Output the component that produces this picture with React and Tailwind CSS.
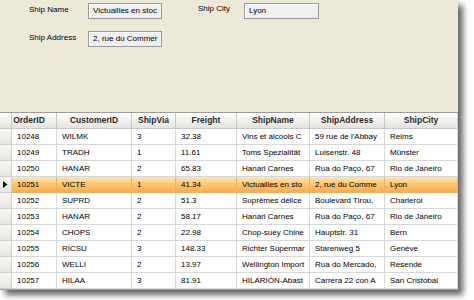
import React from "react";

const rows = [
  ["10248", "WILMK", "3", "32.38", "Vins et alcools C", "59 rue de l'Abbay", "Reims"],
  ["10249", "TRADH", "1", "11.61", "Toms Spezialität", "Luisenstr. 48", "Münster"],
  ["10250", "HANAR", "2", "65.83", "Hanari Carnes", "Rua do Paço, 67", "Rio de Janeiro"],
  ["10251", "VICTE", "1", "41.34", "Victuailles en sto", "2, rue du Comme", "Lyon"],
  ["10252", "SUPRD", "2", "51.3", "Suprêmes délice", "Boulevard Tirou,", "Charleroi"],
  ["10253", "HANAR", "2", "58.17", "Hanari Carnes", "Rua do Paço, 67", "Rio de Janeiro"],
  ["10254", "CHOPS", "2", "22.98", "Chop-suey Chine", "Hauptstr. 31", "Bern"],
  ["10255", "RICSU", "3", "148.33", "Richter Supermar", "Starenweg 5", "Genève"],
  ["10256", "WELLI", "2", "13.97", "Wellington Import", "Rua do Mercado,", "Resende"],
  ["10257", "HILAA", "3", "81.91", "HILARIÓN-Abast", "Carrera 22 con A", "San Cristóbal"],
];

const headers = ["OrderID", "CustomerID", "ShipVia", "Freight", "ShipName", "ShipAddress", "ShipCity"];

function TextBox({ value, w }) {
  return (
    <div
      className={`${w} h-[16px] border border-[#9a9a9a] bg-[#efefef] pl-[4px] text-[8px] leading-[14px] text-black whitespace-nowrap overflow-hidden shadow-[inset_1px_1px_0_#ffffff]`}
    >
      {value}
    </div>
  );
}

export default function App() {
  return (
    <div className="w-[474px] h-[300px] bg-white overflow-hidden font-['Liberation_Sans',Arial,sans-serif]">
      <div className="w-[458px] h-[290px] flex flex-col shadow-[5px_5px_6px_rgba(0,0,0,0.6)]">
        {/* form area */}
        <div className="h-[113px] bg-[#ECE9D8] pt-[3px] pl-[29px] flex flex-col gap-[12px] text-[8px] text-black">
          <div className="flex items-start">
            <div className="w-[59px] leading-[10px] pt-[2px]">Ship Name</div>
            <TextBox value="Victuailles en stoc" w="w-[74px]" />
            <div className="w-[46px] ml-[36px] leading-[10px] pt-[1px]">Ship City</div>
            <TextBox value="Lyon" w="w-[75px]" />
          </div>
          <div className="flex items-start">
            <div className="w-[59px] leading-[10px] pt-[2px]">Ship Address</div>
            <TextBox value="2, rue du Commer" w="w-[74px]" />
          </div>
        </div>

        {/* grid */}
        <div className="flex-1 bg-white border-t border-[#9c9c9c] border-b border-b-[#a0a0a0]">
          <div className="grid grid-cols-[12px_45px_75px_44px_61px_73px_75px_73px]">
            {/* header */}
            <div className="h-[16px] border-r border-b border-[#c8c8c8] bg-gradient-to-b from-[#ffffff] to-[#e4e3dc]" />
            {headers.map((h, i) => (
              <div
                key={h}
                className={`h-[16px] border-r border-b border-[#c8c8c8] bg-gradient-to-b from-[#ffffff] to-[#e4e3dc] text-[8.5px] font-bold text-[#2a2a2a] leading-[15px] text-center whitespace-nowrap overflow-hidden ${i === 0 ? "pr-[10px]" : ""}`}
              >
                {h}
              </div>
            ))}
            {rows.map((r, ri) => {
              const sel = ri === 3;
              return (
                <React.Fragment key={r[0]}>
                  <div className="h-[16px] border-r border-b border-[#d0d0d0] bg-gradient-to-b from-[#f7f7f5] to-[#e6e5e0] flex items-center justify-center">
                    {sel && (
                      <svg width="5" height="7" viewBox="0 0 5 7">
                        <path d="M0 0 L4.5 3.5 L0 7 Z" fill="#000" />
                      </svg>
                    )}
                  </div>
                  {r.map((c, ci) => (
                    <div
                      key={ci}
                      className={`h-[16px] border-r border-b pl-[5px] pr-[1px] text-[8px] leading-[15px] text-black ${
                        sel
                          ? "bg-gradient-to-b from-[#ffe6b0] via-[#fcc46e] to-[#f8ad4a] border-[#e8b070]"
                          : "border-[#d8d8d8]"
                      }`}
                    >
                      <div className="whitespace-nowrap overflow-hidden">{c}</div>
                    </div>
                  ))}
                </React.Fragment>
              );
            })}
          </div>
        </div>
      </div>
    </div>
  );
}
